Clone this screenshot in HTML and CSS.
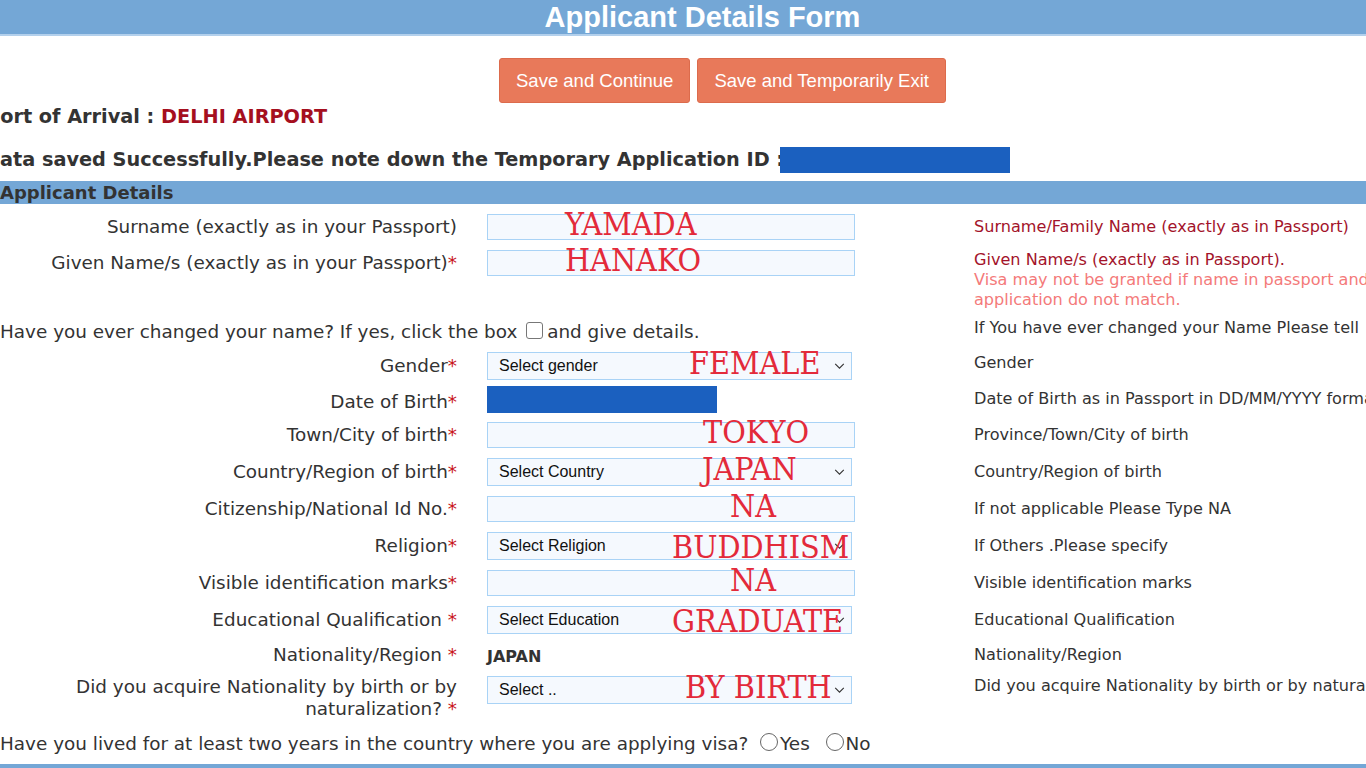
FILE: index.html
```html
<!DOCTYPE html>
<html lang="en">
<head>
    <meta charset="UTF-8">
    <meta name="viewport" content="width=device-width, initial-scale=1.0">
    <title>Applicant Details Form</title>
    <link rel="stylesheet" href="styles.css">
</head>
<body>
    <h1 class="title-bar">Applicant Details Form</h1>

    <div class="actions">
        <button class="btn">Save and Continue</button>
        <button class="btn">Save and Temporarily Exit</button>
    </div>

    <p class="notice cut-p">Port of Arrival : <span class="port">DELHI AIRPORT</span></p>
    <p class="notice cut-d saved">Data saved Successfully.Please note down the Temporary Application ID :<span class="masked id-mask"></span></p>

    <div class="section-bar">Applicant Details</div>

    <div class="form">
        <div class="row">
            <label class="label">Surname (exactly as in your Passport)</label>
            <div class="field"><input class="text-input" type="text"><span class="ink ink-name">YAMADA</span></div>
            <div class="help dark-red">Surname/Family Name (exactly as in Passport)</div>
        </div>

        <div class="row top given">
            <label class="label">Given Name/s (exactly as in your Passport)<span class="req">*</span></label>
            <div class="field"><input class="text-input" type="text"><span class="ink ink-name">HANAKO</span></div>
            <div class="help">
                <span class="dark-red">Given Name/s (exactly as in Passport).</span><br>
                <span class="soft-red">Visa may not be granted if name in passport and<br>application do not match.</span>
            </div>
        </div>

        <div class="row h35">
            <div class="span-2">Have you ever changed your name? If yes, click the box <span class="check"></span>and give details.</div>
            <div class="help nudge-up">If You have ever changed your Name Please tell</div>
        </div>

        <div class="row h33">
            <label class="label">Gender<span class="req">*</span></label>
            <div class="field">
                <div class="select">Select gender<svg class="chev" width="12" height="7" viewBox="0 0 12 7"><path d="M1 1l5 5 5-5" fill="none" stroke="#333" stroke-width="1.3"/></svg></div>
                <span class="ink ink-gender">FEMALE</span>
            </div>
            <div class="help nudge-up-s">Gender</div>
        </div>

        <div class="row h34">
            <label class="label dob-label">Date of Birth<span class="req">*</span></label>
            <div class="field"><div class="masked dob"></div></div>
            <div class="help">Date of Birth as in Passport in DD/MM/YYYY format</div>
        </div>

        <div class="row h38">
            <label class="label">Town/City of birth<span class="req">*</span></label>
            <div class="field"><input class="text-input" type="text"><span class="ink ink-town">TOKYO</span></div>
            <div class="help">Province/Town/City of birth</div>
        </div>

        <div class="row">
            <label class="label">Country/Region of birth<span class="req">*</span></label>
            <div class="field">
                <div class="select">Select Country<svg class="chev" width="12" height="7" viewBox="0 0 12 7"><path d="M1 1l5 5 5-5" fill="none" stroke="#333" stroke-width="1.3"/></svg></div>
                <span class="ink ink-country">JAPAN</span>
            </div>
            <div class="help">Country/Region of birth</div>
        </div>

        <div class="row h38">
            <label class="label">Citizenship/National Id No.<span class="req">*</span></label>
            <div class="field"><input class="text-input" type="text"><span class="ink ink-na">NA</span></div>
            <div class="help">If not applicable Please Type NA</div>
        </div>

        <div class="row">
            <label class="label">Religion<span class="req">*</span></label>
            <div class="field">
                <div class="select">Select Religion<svg class="chev" width="12" height="7" viewBox="0 0 12 7"><path d="M1 1l5 5 5-5" fill="none" stroke="#333" stroke-width="1.3"/></svg></div>
                <span class="ink ink-wide ink-low">BUDDHISM</span>
            </div>
            <div class="help">If Others .Please specify</div>
        </div>

        <div class="row h37">
            <label class="label">Visible identification marks<span class="req">*</span></label>
            <div class="field"><input class="text-input" type="text"><span class="ink ink-na">NA</span></div>
            <div class="help">Visible identification marks</div>
        </div>

        <div class="row h37">
            <label class="label">Educational Qualification <span class="req">*</span></label>
            <div class="field">
                <div class="select">Select Education<svg class="chev" width="12" height="7" viewBox="0 0 12 7"><path d="M1 1l5 5 5-5" fill="none" stroke="#333" stroke-width="1.3"/></svg></div>
                <span class="ink ink-wide ink-low">GRADUATE</span>
            </div>
            <div class="help">Educational Qualification</div>
        </div>

        <div class="row h34">
            <label class="label">Nationality/Region <span class="req">*</span></label>
            <div class="field"><strong class="static">JAPAN</strong></div>
            <div class="help">Nationality/Region</div>
        </div>

        <div class="row top acquire">
            <label class="label two-line">Did you acquire Nationality by birth or by<br>naturalization? <span class="req">*</span></label>
            <div class="field">
                <div class="select">Select ..<svg class="chev" width="12" height="7" viewBox="0 0 12 7"><path d="M1 1l5 5 5-5" fill="none" stroke="#333" stroke-width="1.3"/></svg></div>
                <span class="ink ink-birth">BY BIRTH</span>
            </div>
            <div class="help">Did you acquire Nationality by birth or by naturalization?</div>
        </div>

        <div class="row h38">
            <div class="span-3">Have you lived for at least two years in the country where you are applying visa? <span class="radio"></span>Yes <span class="radio gap"></span>No</div>
        </div>
    </div>

    <div class="section-bar end-bar"></div>
</body>
</html>
```

FILE: styles.css
```css
/* Applicant form */
html, body {
    overflow: hidden;
}

body {
    margin: 0;
    font-family: "DejaVu Sans", Verdana, sans-serif;
    font-size: 18.4px;
    color: #333;
    background: #fff;
}

.title-bar {
    margin: 0;
    height: 34px;
    line-height: 34px;
    padding-left: 39px;
    background: #74a7d6;
    border-bottom: 2px solid #b3d0ec;
    color: #fff;
    font-family: "Liberation Sans", Arial, sans-serif;
    font-size: 29px;
    font-weight: bold;
    text-align: center;
}

.actions {
    display: flex;
    justify-content: center;
    gap: 7px;
    margin-top: 22px;
    padding-left: 79px;
}

.btn {
    height: 45px;
    padding: 0 16px;
    background: #e8795a;
    border: 1px solid #dc6b4c;
    border-radius: 3px;
    color: #fff;
    font-family: "Liberation Sans", Arial, sans-serif;
    font-size: 18.5px;
}

.notice {
    margin: 0;
    font-size: 19.3px;
    font-weight: bold;
    line-height: 26px;
    white-space: nowrap;
}

.cut-p {
    margin-top: 1px;
    margin-left: -14px;
}

.cut-d {
    margin-left: -16px;
}

.saved {
    margin-top: 17px;
}

.port {
    color: #a50f1f;
}

.masked {
    display: inline-block;
    width: 230px;
    height: 26px;
    background: #1b60bf;
    vertical-align: top;
}

.id-mask {
    margin-left: -4px;
}

.section-bar {
    margin-top: 8px;
    height: 23px;
    line-height: 23px;
    background: #74a7d6;
    font-size: 18px;
    font-weight: bold;
}

.end-bar {
    margin-top: 1px;
}

.form {
    padding-top: 5px;
}

.row {
    display: grid;
    grid-template-columns: 487px 487px 1fr;
    align-items: center;
    height: 36px;
    white-space: nowrap;
}

.row.h33 { height: 33px; }
.row.h34 { height: 34px; }
.row.h35 { height: 35px; }
.row.h37 { height: 37px; }
.row.h38 { height: 38px; }

.row.top {
    align-items: start;
    height: auto;
}

.row.given {
    padding: 5px 0 4px;
}

.row.acquire {
    padding-top: 4px;
    height: 53px;
    box-sizing: border-box;
}

.label {
    padding-right: 30px;
    text-align: right;
    line-height: 26px;
}

.two-line {
    line-height: 22px;
}

.dob-label {
    padding-top: 6px;
}

.req {
    color: #c8141e;
}

.span-2 {
    grid-column: 1 / span 2;
    line-height: 26px;
}

.span-3 {
    grid-column: 1 / span 3;
    line-height: 26px;
}

.field {
    position: relative;
    justify-self: start;
}

.text-input {
    display: block;
    box-sizing: border-box;
    width: 368px;
    height: 26px;
    margin: 0;
    background: #f5f9fe;
    border: 1px solid #a9d3f6;
}

.select {
    display: flex;
    align-items: center;
    justify-content: space-between;
    box-sizing: border-box;
    width: 365px;
    height: 28px;
    padding: 0 6px 0 11px;
    background: #f5f9fe;
    border: 1px solid #a9d3f6;
    color: #111;
    font-family: "Liberation Sans", Arial, sans-serif;
    font-size: 16px;
}

.chev {
    width: 11px;
    height: 6px;
}

.dob {
    display: block;
    height: 27px;
}

.static {
    font-size: 16px;
}

.help {
    font-size: 16.1px;
    line-height: 20px;
}

.nudge-up {
    margin-top: -8px;
}

.nudge-up-s {
    margin-top: -5px;
}

.dark-red {
    color: #a3132a;
}

.soft-red {
    color: #f47a7a;
}

.check {
    display: inline-block;
    width: 15px;
    height: 15px;
    margin: 0 4px 0 3px;
    border: 1px solid #777;
    border-radius: 3px;
    vertical-align: -1px;
}

.radio {
    display: inline-block;
    width: 16px;
    height: 16px;
    margin: 0 2px 0 6px;
    border: 1px solid #666;
    border-radius: 50%;
    vertical-align: -1px;
}

.radio.gap {
    margin-left: 10px;
}

/* handwritten values pasted on the screenshot */
.ink {
    position: absolute;
    top: 50%;
    transform: translateY(-58%);
    color: #e32a3a;
    font-family: "DejaVu Serif Condensed", "DejaVu Serif", serif;
    font-stretch: condensed;
    font-size: 32px;
    line-height: 1;
    pointer-events: none;
}

.ink-low { transform: translateY(-46%); }
.ink-name { left: 78px; }
.ink-gender { left: 202px; }
.ink-town { left: 216px; }
.ink-country { left: 215px; }
.ink-na { left: 243px; }
.ink-wide { left: 185px; }
.ink-birth { left: 198px; }
```
